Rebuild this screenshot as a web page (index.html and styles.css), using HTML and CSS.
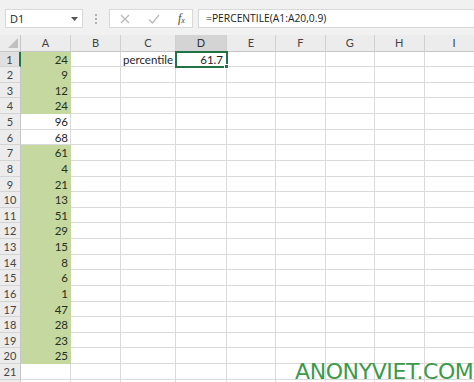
FILE: index.html
```html
<!DOCTYPE html>
<html>
<head>
<meta charset="utf-8">
<link rel="stylesheet" href="styles.css">
</head>
<body>
<div class="bar">
  <div class="namebox"><span>D1</span><svg class="caret" width="7" height="4" viewBox="0 0 7 4"><path d="M0 0h7L3.5 4z" fill="#555"/></svg></div>
  <div class="dots"><i></i><i></i><i></i></div>
  <div class="fbtns">
    <svg width="10" height="10" viewBox="0 0 10 10"><path d="M1 1l8 8M9 1l-8 8" stroke="#b8b8b8" stroke-width="1.2" fill="none"/></svg>
    <svg width="12" height="10" viewBox="0 0 12 10"><path d="M1 5.5l3.5 3.5L11 1" stroke="#b8b8b8" stroke-width="1.2" fill="none"/></svg>
    <span class="fx">f<sub>x</sub></span>
  </div>
  <div class="finput">=PERCENTILE(A1:A20,0.9)</div>
</div>
<div class="sheet">
  <div class="corner"><span class="tri"></span></div><div class="ch">A</div><div class="ch">B</div><div class="ch">C</div><div class="ch chs">D</div><div class="ch">E</div><div class="ch">F</div><div class="ch">G</div><div class="ch">H</div><div class="ch">I</div>
  <div class="rh rhs">1</div><div class="c g">24</div><div class="c"></div><div class="c t">percentile</div><div class="c sel">61.7</div><div class="c"></div><div class="c"></div><div class="c"></div><div class="c"></div><div class="c"></div>
  <div class="rh">2</div><div class="c g">9</div><div class="c"></div><div class="c"></div><div class="c"></div><div class="c"></div><div class="c"></div><div class="c"></div><div class="c"></div><div class="c"></div>
  <div class="rh">3</div><div class="c g">12</div><div class="c"></div><div class="c"></div><div class="c"></div><div class="c"></div><div class="c"></div><div class="c"></div><div class="c"></div><div class="c"></div>
  <div class="rh">4</div><div class="c g">24</div><div class="c"></div><div class="c"></div><div class="c"></div><div class="c"></div><div class="c"></div><div class="c"></div><div class="c"></div><div class="c"></div>
  <div class="rh">5</div><div class="c">96</div><div class="c"></div><div class="c"></div><div class="c"></div><div class="c"></div><div class="c"></div><div class="c"></div><div class="c"></div><div class="c"></div>
  <div class="rh">6</div><div class="c">68</div><div class="c"></div><div class="c"></div><div class="c"></div><div class="c"></div><div class="c"></div><div class="c"></div><div class="c"></div><div class="c"></div>
  <div class="rh">7</div><div class="c g">61</div><div class="c"></div><div class="c"></div><div class="c"></div><div class="c"></div><div class="c"></div><div class="c"></div><div class="c"></div><div class="c"></div>
  <div class="rh">8</div><div class="c g">4</div><div class="c"></div><div class="c"></div><div class="c"></div><div class="c"></div><div class="c"></div><div class="c"></div><div class="c"></div><div class="c"></div>
  <div class="rh">9</div><div class="c g">21</div><div class="c"></div><div class="c"></div><div class="c"></div><div class="c"></div><div class="c"></div><div class="c"></div><div class="c"></div><div class="c"></div>
  <div class="rh">10</div><div class="c g">13</div><div class="c"></div><div class="c"></div><div class="c"></div><div class="c"></div><div class="c"></div><div class="c"></div><div class="c"></div><div class="c"></div>
  <div class="rh">11</div><div class="c g">51</div><div class="c"></div><div class="c"></div><div class="c"></div><div class="c"></div><div class="c"></div><div class="c"></div><div class="c"></div><div class="c"></div>
  <div class="rh">12</div><div class="c g">29</div><div class="c"></div><div class="c"></div><div class="c"></div><div class="c"></div><div class="c"></div><div class="c"></div><div class="c"></div><div class="c"></div>
  <div class="rh">13</div><div class="c g">15</div><div class="c"></div><div class="c"></div><div class="c"></div><div class="c"></div><div class="c"></div><div class="c"></div><div class="c"></div><div class="c"></div>
  <div class="rh">14</div><div class="c g">8</div><div class="c"></div><div class="c"></div><div class="c"></div><div class="c"></div><div class="c"></div><div class="c"></div><div class="c"></div><div class="c"></div>
  <div class="rh">15</div><div class="c g">6</div><div class="c"></div><div class="c"></div><div class="c"></div><div class="c"></div><div class="c"></div><div class="c"></div><div class="c"></div><div class="c"></div>
  <div class="rh">16</div><div class="c g">1</div><div class="c"></div><div class="c"></div><div class="c"></div><div class="c"></div><div class="c"></div><div class="c"></div><div class="c"></div><div class="c"></div>
  <div class="rh">17</div><div class="c g">47</div><div class="c"></div><div class="c"></div><div class="c"></div><div class="c"></div><div class="c"></div><div class="c"></div><div class="c"></div><div class="c"></div>
  <div class="rh">18</div><div class="c g">28</div><div class="c"></div><div class="c"></div><div class="c"></div><div class="c"></div><div class="c"></div><div class="c"></div><div class="c"></div><div class="c"></div>
  <div class="rh">19</div><div class="c g">23</div><div class="c"></div><div class="c"></div><div class="c"></div><div class="c"></div><div class="c"></div><div class="c"></div><div class="c"></div><div class="c"></div>
  <div class="rh">20</div><div class="c g">25</div><div class="c"></div><div class="c"></div><div class="c"></div><div class="c"></div><div class="c"></div><div class="c"></div><div class="c"></div><div class="c"></div>
  <div class="rh">21</div><div class="c"></div><div class="c"></div><div class="c"></div><div class="c"></div><div class="c"></div><div class="c"></div><div class="c"></div><div class="c"></div><div class="c"></div>
  <div class="rh"></div><div class="c"></div><div class="c"></div><div class="c"></div><div class="c"></div><div class="c"></div><div class="c"></div><div class="c"></div><div class="c"></div><div class="c"></div>
</div>
<div class="mark">ANONYVIET.COM</div>
</body>
</html>
```
FILE: styles.css
```css
html, body {
  margin: 0;
  padding: 0;
}
body {
  width: 474px;
  height: 382px;
  overflow: hidden;
  position: relative;
  background: #fff;
  font-family: Lato, "Noto Sans", sans-serif;
}
.bar {
  height: 35px;
  box-sizing: border-box;
  background: #f1f1f1;
  display: flex;
  align-items: flex-start;
  padding: 9px 0 0 5px;
  white-space: nowrap;
}
.namebox {
  width: 78px;
  height: 19px;
  box-sizing: border-box;
  background: #fff;
  border: 1px solid #d8d8d8;
  display: flex;
  align-items: center;
  justify-content: space-between;
  padding: 0 4px 0 4px;
  font-family: "Open Sans", sans-serif;
  font-size: 11px;
  color: #222;
}
.caret {
  margin-top: 1px;
}
.dots {
  width: 26px;
  height: 19px;
  display: flex;
  flex-direction: column;
  align-items: center;
  justify-content: center;
  gap: 2px;
}
.dots i {
  width: 2px;
  height: 2px;
  background: #b0b0b0;
}
.fbtns {
  width: 84px;
  height: 19px;
  box-sizing: border-box;
  background: #fff;
  border: 1px solid #d8d8d8;
  display: flex;
  align-items: center;
  padding-left: 10px;
  gap: 18px;
}
.fx {
  font-family: "Liberation Serif", serif;
  font-style: italic;
  font-size: 12px;
  color: #444;
}
.fx sub {
  font-size: 8px;
  vertical-align: -1px;
}
.finput {
  margin-left: 5px;
  flex: 1;
  height: 19px;
  box-sizing: border-box;
  background: #fff;
  border: 1px solid #d8d8d8;
  border-right: 0;
  padding-left: 7px;
  font-family: "Open Sans", sans-serif;
  font-size: 10.3px;
  line-height: 17px;
  color: #222;
}
.sheet {
  display: grid;
  grid-template-columns: 21px 50px 50px 55px 51px 49px 49.5px 49.5px 49.5px 60px;
  grid-template-rows: 16.5px;
  grid-auto-rows: 15.64px;
  font-size: 11.5px;
  color: #1f1f1f;
}
.sheet > div {
  box-sizing: border-box;
  border-right: 1px solid #dadada;
  border-bottom: 1px solid #dadada;
  overflow: hidden;
  white-space: nowrap;
}
.corner {
  background: #ececec;
  position: relative;
  border-color: #c6c6c6 !important;
}
.tri {
  position: absolute;
  right: 2px;
  bottom: 3px;
  width: 0;
  height: 0;
  border-left: 10px solid transparent;
  border-bottom: 10px solid #c0c0c0;
}
.ch {
  background: #ececec;
  text-align: center;
  color: #444;
  line-height: 16px;
  font-size: 11px;
  border-right-color: #d0d0d0 !important;
  border-bottom-color: #c6c6c6 !important;
}
.chs {
  background: #d4d4d4;
  color: #333;
  border-bottom: 1px solid #217346 !important;
}
.rh {
  background: #ececec;
  text-align: center;
  color: #444;
  font-size: 11px;
  line-height: 16px;
  border-right-color: #c6c6c6 !important;
  border-bottom-color: #d4d4d4 !important;
}
.rhs {
  background: #e0e0e0;
  border-right: 2px solid #217346 !important;
}
.c {
  text-align: right;
  padding-right: 2px;
  line-height: 15px;
}
.t {
  text-align: left;
  padding-left: 2px;
}
.g {
  background: #c5d8a0;
  border-color: #c5d8a0 !important;
  color: #25301a;
}
.sel {
  position: relative;
  outline: 2px solid #217346;
  outline-offset: -1px;
  overflow: visible !important;
  padding-right: 3px;
}
.sel::after {
  content: "";
  position: absolute;
  right: -3px;
  bottom: -3px;
  width: 5px;
  height: 5px;
  background: #217346;
  border: 1px solid #fff;
  box-sizing: border-box;
}
.mark {
  position: absolute;
  left: 295px;
  top: 362px;
  font-family: "DejaVu Sans", sans-serif;
  font-size: 22px;
  line-height: 20px;
  letter-spacing: -0.4px;
  color: #3c9a4a;
  white-space: nowrap;
}
```
